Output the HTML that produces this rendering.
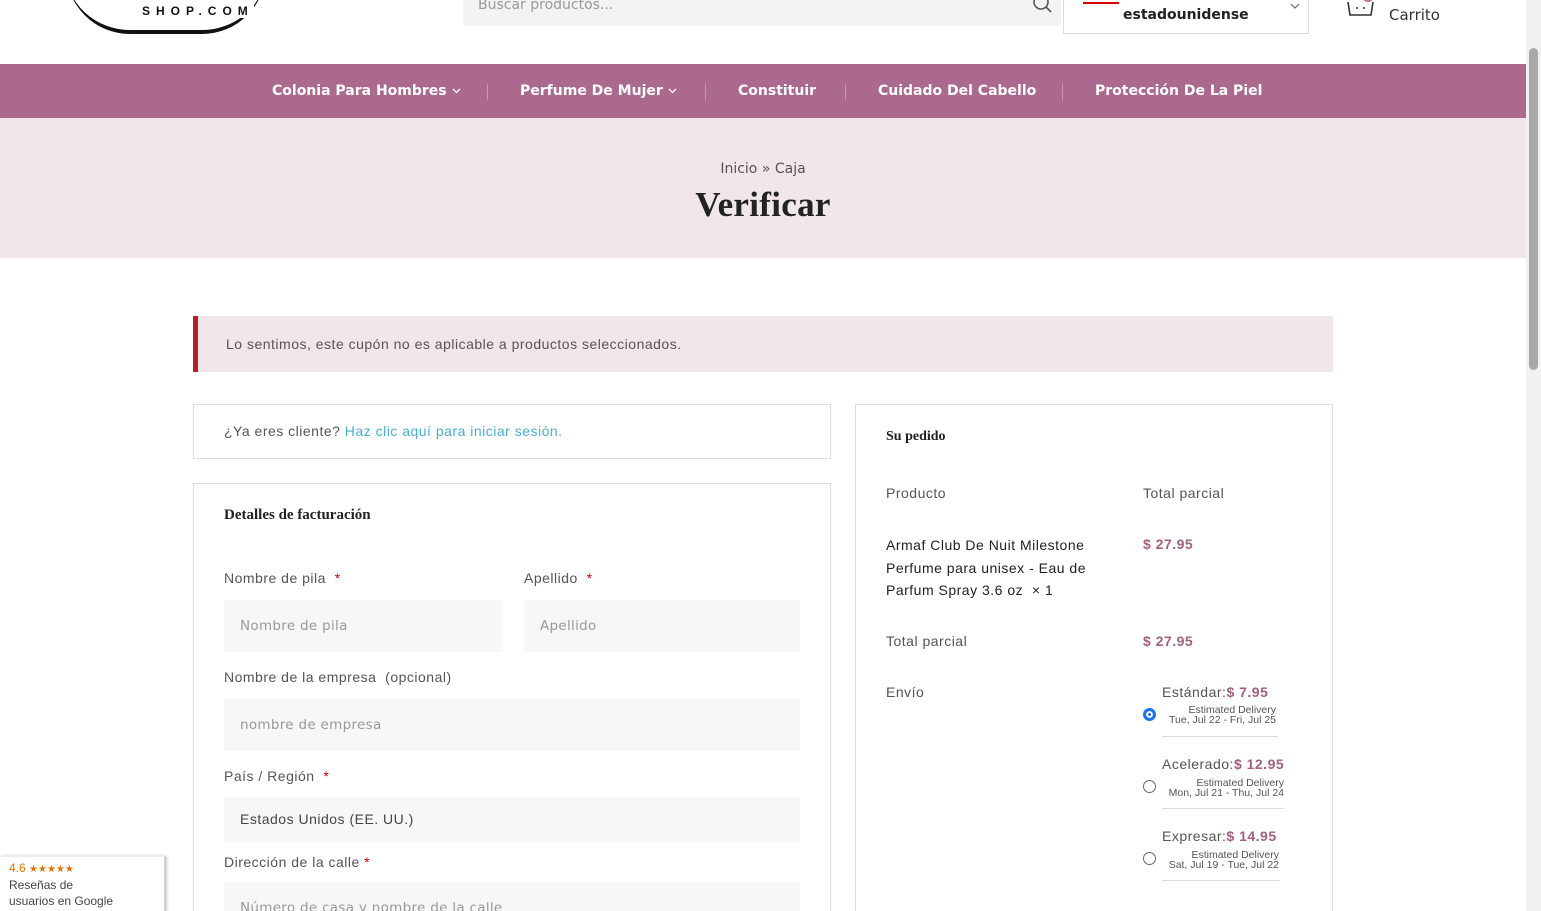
<!DOCTYPE html>
<html><head><meta charset="utf-8"><style>
*{margin:0;padding:0;box-sizing:border-box}
html,body{width:1541px;height:911px;overflow:hidden}
body{background:#fff;font-family:"Liberation Sans",sans-serif;color:#444;position:relative;letter-spacing:.5px}
.a{position:absolute}
.nav{top:64px;left:0;width:1526px;height:54px;background:#ab6a8d;letter-spacing:0}
.nav span{position:absolute;top:19px;color:#fff;font-family:"DejaVu Sans",sans-serif;font-weight:bold;font-size:14px}
.nav svg{vertical-align:middle}
.sep{position:absolute;top:20px;width:1px;height:16px;background:#c995b0}
.box{border:1px solid #ddd;background:#fff}
.lbl{font-size:14px;color:#555}
.req{color:#c00}
.inp{background:#f7f7f7;height:52px;color:#999;padding:18px 16px;font-family:"DejaVu Sans",sans-serif;font-size:13.5px;letter-spacing:.3px}
.pr{color:#a0607f;font-weight:bold;font-size:14px}
.ship{font-size:14px;color:#555}
.est{font-size:10.5px;color:#555;text-align:right;line-height:10px;letter-spacing:0;white-space:nowrap}
.rad{width:13px;height:13px;border:1px solid #666;border-radius:50%}
.hr{height:1px;background:#ddd}
</style></head><body>
<!-- header -->
<div class="a" style="left:66px;top:-30px;width:200px;height:64px;border-bottom:4px solid #111;border-radius:0 0 100px 100px"></div>
<div class="a" style="left:86px;top:-22px;font-size:24px;font-weight:bold;color:#111;font-family:'Liberation Serif',serif;letter-spacing:1px">FRAGRANCE</div>
<div class="a" style="left:140px;top:4px;font-size:12px;letter-spacing:6px;font-weight:bold;color:#111;background:#fff;padding-left:2px">SHOP.COM</div>
<div class="a" style="left:463px;top:-4px;width:598px;height:30px;background:#f3f3f3;border-radius:0 0 4px 4px"></div>
<div class="a" style="left:478px;top:-3px;font-size:14px;color:#999;font-family:'DejaVu Sans',sans-serif;letter-spacing:0">Buscar productos...</div>
<svg class="a" style="left:1032px;top:-4px" width="22" height="20"><circle cx="9" cy="6" r="7" fill="none" stroke="#555" stroke-width="1.6"/><line x1="14" y1="11" x2="19" y2="16" stroke="#555" stroke-width="1.6"/></svg>
<div class="a box" style="left:1063px;top:-2px;width:246px;height:36px"></div>
<div class="a" style="left:1083px;top:2px;width:36px;height:2px;background:#d00"></div>
<div class="a" style="left:1123px;top:7px;font-size:14px;font-weight:bold;color:#222;font-family:'DejaVu Sans',sans-serif;letter-spacing:0">estadounidense</div>
<svg class="a" style="left:1290px;top:2px" width="10" height="8"><path d="M1 2 L5 6 L9 2" fill="none" stroke="#666" stroke-width="1.2"/></svg>
<svg class="a" style="left:1345px;top:-2px" width="32" height="22"><path d="M3 4 L5 17 L26 17 L28 4" fill="none" stroke="#333" stroke-width="1.6"/><circle cx="12" cy="10" r="1" fill="#333"/><circle cx="19" cy="10" r="1" fill="#333"/><circle cx="23" cy="-2" r="6" fill="#b57a9a"/></svg>
<div class="a" style="left:1389px;top:6px;font-size:15px;color:#333;font-family:'DejaVu Sans',sans-serif;letter-spacing:0">Carrito</div>
<!-- scrollbar -->
<div class="a" style="left:1526px;top:0;width:15px;height:911px;background:#f1f1f1"></div>
<div class="a" style="left:1529px;top:48px;width:9px;height:322px;background:#a8a8a8;border-radius:5px"></div>
<!-- nav -->
<div class="a nav">
<span style="left:272px">Colonia Para Hombres <svg width="9" height="6"><path d="M1 1 L4.5 4.5 L8 1" fill="none" stroke="#fff" stroke-width="1.3"/></svg></span><div class="sep" style="left:487px"></div>
<span style="left:520px">Perfume De Mujer <svg width="9" height="6"><path d="M1 1 L4.5 4.5 L8 1" fill="none" stroke="#fff" stroke-width="1.3"/></svg></span><div class="sep" style="left:705px"></div>
<span style="left:738px">Constituir</span><div class="sep" style="left:845px"></div>
<span style="left:878px">Cuidado Del Cabello</span><div class="sep" style="left:1062px"></div>
<span style="left:1095px">Protección De La Piel</span>
</div>
<!-- hero -->
<div class="a" style="top:118px;left:0;width:1526px;height:140px;background:#f1e6eb"></div>
<div class="a" style="top:161px;left:0;width:1526px;text-align:center;font-size:14px;color:#555;font-family:'DejaVu Sans',sans-serif;letter-spacing:0">Inicio » Caja</div>
<div class="a" style="top:185px;left:0;width:1526px;text-align:center;font-size:35px;font-weight:bold;color:#222;font-family:'Liberation Serif',serif;letter-spacing:.3px">Verificar</div>
<!-- notice -->
<div class="a" style="left:193px;top:316px;width:1140px;height:56px;background:#f1e6eb;border-left:5px solid #b0202f"></div>
<div class="a" style="left:226px;top:336px;font-size:14px;color:#555">Lo sentimos, este cupón no es aplicable a productos seleccionados.</div>
<!-- login -->
<div class="a box" style="left:193px;top:404px;width:638px;height:55px"></div>
<div class="a" style="left:224px;top:423px;font-size:14px;color:#555">¿Ya eres cliente? <span style="color:#4aaed0">Haz clic aquí para iniciar sesión.</span></div>
<!-- billing -->
<div class="a box" style="left:193px;top:483px;width:638px;height:440px"></div>
<div class="a" style="left:224px;top:507px;font-size:15px;font-weight:bold;color:#222;font-family:'Liberation Serif',serif;letter-spacing:0">Detalles de facturación</div>
<div class="a lbl" style="left:224px;top:570px">Nombre de pila &nbsp;<span class="req">*</span></div>
<div class="a lbl" style="left:524px;top:570px">Apellido &nbsp;<span class="req">*</span></div>
<div class="a inp" style="left:224px;top:600px;width:278px">Nombre de pila</div>
<div class="a inp" style="left:524px;top:600px;width:276px">Apellido</div>
<div class="a lbl" style="left:224px;top:669px">Nombre de la empresa &nbsp;(opcional)</div>
<div class="a inp" style="left:224px;top:699px;width:576px">nombre de empresa</div>
<div class="a lbl" style="left:224px;top:768px">País / Región &nbsp;<span class="req">*</span></div>
<div class="a inp" style="left:224px;top:797px;width:576px;height:45px;padding-top:14px;color:#444;font-family:'Liberation Sans',sans-serif;font-size:14px;letter-spacing:.5px">Estados Unidos (EE. UU.)</div>
<div class="a lbl" style="left:224px;top:854px">Dirección de la calle <span class="req">*</span></div>
<div class="a inp" style="left:224px;top:882px;width:576px">Número de casa y nombre de la calle</div>
<!-- order -->
<div class="a box" style="left:855px;top:404px;width:478px;height:520px"></div>
<div class="a" style="left:886px;top:429px;font-size:14px;font-weight:bold;color:#222;font-family:'Liberation Serif',serif;letter-spacing:0">Su pedido</div>
<div class="a lbl" style="left:886px;top:485px">Producto</div>
<div class="a lbl" style="left:1143px;top:485px">Total parcial</div>
<div class="a" style="left:886px;top:534px;font-size:14px;color:#222;line-height:22.5px;width:215px">Armaf Club De Nuit Milestone Perfume para unisex - Eau de Parfum Spray 3.6 oz &nbsp;× 1</div>
<div class="a pr" style="left:1143px;top:536px">$ 27.95</div>
<div class="a lbl" style="left:886px;top:633px">Total parcial</div>
<div class="a pr" style="left:1143px;top:633px">$ 27.95</div>
<div class="a lbl" style="left:886px;top:684px">Envío</div>
<div class="a ship" style="left:1162px;top:684px">Estándar:<span class="pr">$ 7.95</span></div>
<div class="a rad" style="left:1143px;top:708px;border:3px solid #1a73e8;background:#1a73e8;box-shadow:inset 0 0 0 2px #fff"></div>
<div class="a est" style="left:1162px;top:705px;width:114px">Estimated Delivery<br>Tue, Jul 22 - Fri, Jul 25</div>
<div class="a hr" style="left:1162px;top:736px;width:116px"></div>
<div class="a ship" style="left:1162px;top:756px">Acelerado:<span class="pr">$ 12.95</span></div>
<div class="a rad" style="left:1143px;top:780px"></div>
<div class="a est" style="left:1162px;top:778px;width:122px">Estimated Delivery<br>Mon, Jul 21 - Thu, Jul 24</div>
<div class="a hr" style="left:1162px;top:808px;width:122px"></div>
<div class="a ship" style="left:1162px;top:828px">Expresar:<span class="pr">$ 14.95</span></div>
<div class="a rad" style="left:1143px;top:852px"></div>
<div class="a est" style="left:1162px;top:850px;width:117px">Estimated Delivery<br>Sat, Jul 19 - Tue, Jul 22</div>
<div class="a hr" style="left:1162px;top:880px;width:118px"></div>
<!-- google badge -->
<div class="a" style="left:0;top:856px;width:166px;height:60px;background:#fff;border-right:2px solid #ccc;border-top:1px solid #eee;box-shadow:1px 0 3px #ccc"></div>
<div class="a" style="left:9px;top:861px;font-size:12px;color:#e37400;letter-spacing:0">4.6 <span style="font-size:10px">★★★★★</span></div>
<div class="a" style="left:9px;top:877px;font-size:12px;color:#444;line-height:16px;letter-spacing:0">Reseñas de<br>usuarios en Google</div>
</body></html>
